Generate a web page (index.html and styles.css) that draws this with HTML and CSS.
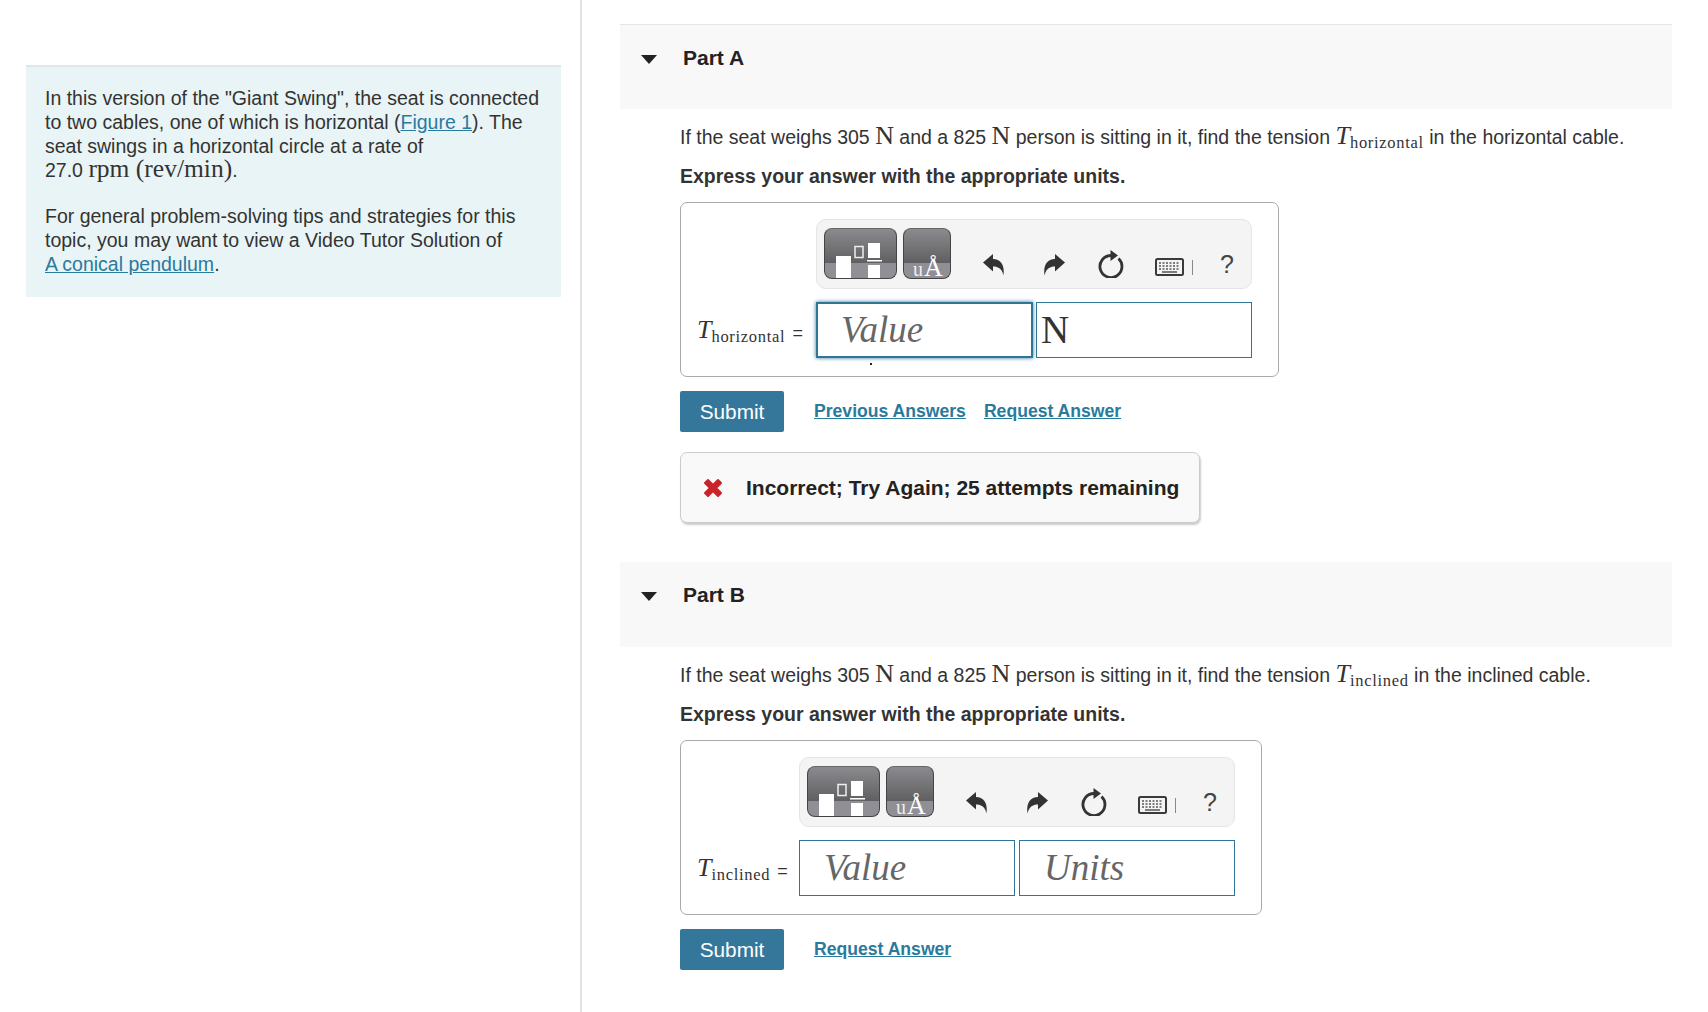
FILE: index.html
```html
<!DOCTYPE html>
<html>
<head>
    <title>Giant Swing</title>
    <link rel="stylesheet" href="styles.css">
</head>
<body>
    <svg class="sprite" width="0" height="0">
        <symbol id="undo" viewBox="0 0 22 23">
            <path d="M0 9.5 L10 1 V6 C17 6 22 11 20.5 22.5 C19 16 15.500 13.500 10 13.500 V18.500 Z"/>
        </symbol>
        <symbol id="redo" viewBox="0 0 22 23">
            <path d="M22 9.5 L12 1 V6 C5 6 0 11 1.500 22.500 C3 16 6.500 13.500 12 13.500 V18.500 Z"/>
        </symbol>
        <symbol id="reset" viewBox="0 0 26 28">
            <path d="M20.500 8.500 A11 11 0 1 1 13 5.500" fill="none" stroke="currentColor" stroke-width="2.800"/>
            <path d="M12.500 0 L20 5.500 L12.500 11 Z"/>
        </symbol>
        <symbol id="keyboard" viewBox="0 0 29 18">
            <rect x="1" y="1" width="27" height="16" rx="1.500" fill="#f4f4f4" stroke="#3a3a3a" stroke-width="2"/>
            <path d="M4 5 H25 M4 8 H25 M4 11 H25" stroke="#555" stroke-width="1.500" stroke-dasharray="2 1.500"/>
            <path d="M7 14 H22" stroke="#555" stroke-width="1.500"/>
        </symbol>
        <symbol id="templates" viewBox="0 0 73 51">
            <rect x="12" y="28" width="15" height="23" fill="#fff"/>
            <rect x="31" y="18.500" width="8" height="11" fill="none" stroke="#eee" stroke-width="1.500"/>
            <rect x="44" y="15" width="12" height="15" fill="#fff"/>
            <rect x="43" y="32" width="15" height="1.500" fill="#fff"/>
            <rect x="44" y="37" width="12" height="14" fill="#fff"/>
        </symbol>
    </svg>

    <div class="page">
        <!-- Intro column -->
        <div class="intro-col">
            <div class="intro">
                <p>In this version of the "Giant Swing", the seat is connected to two cables, one of which is horizontal (<a href="#">Figure 1</a>). The seat swings in a horizontal circle at a rate of <span class="nowrap">27.0 <span class="math">rpm (rev/min)</span>.</span></p>
                <p>For general problem-solving tips and strategies for this topic, you may want to view a Video Tutor Solution of <a class="nowrap" href="#">A conical pendulum</a>.</p>
            </div>
        </div>

        <!-- Parts column -->
        <div class="parts-col">
            <!-- Part A -->
            <div class="part part-first">
                <div class="part-head">
                    <span class="arrow"></span>
                    <h3>Part A</h3>
                </div>
                <div class="part-body">
                    <p class="question">If the seat weighs 305 <span class="big">N</span> and a 825 <span class="big">N</span> person is sitting in it, find the tension <span class="big"><i>T</i></span><span class="sub">horizontal</span> in the horizontal cable.</p>
                    <p class="express">Express your answer with the appropriate units.</p>
                    <div class="answer">
                        <div class="toolbar">
                            <div class="tool-btn tool-wide"><svg class="tool-art"><use href="#templates"/></svg></div>
                            <div class="tool-btn tool-units"><span class="units-glyph"><span class="units-u">u</span>Å</span></div>
                            <div class="tool-icons">
                                <svg class="icon icon-undo"><use href="#undo"/></svg>
                                <svg class="icon icon-redo"><use href="#redo"/></svg>
                                <svg class="icon icon-reset"><use href="#reset"/></svg>
                                <svg class="icon icon-kbd"><use href="#keyboard"/></svg>
                                <span class="tool-sep"></span>
                                <span class="tool-help">?</span>
                            </div>
                        </div>
                        <div class="answer-row">
                            <div class="label label-a"><i>T</i><span class="sub">horizontal</span><span class="equals">=</span></div>
                            <div class="field focused placeholder">Value<span class="stray-dot"></span></div>
                            <div class="field filled">N</div>
                        </div>
                    </div>
                    <div class="actions">
                        <button class="submit">Submit</button>
                        <a class="action-link" href="#">Previous Answers</a>
                        <a class="action-link" href="#">Request Answer</a>
                    </div>
                    <div class="feedback">
                        <svg class="cross" viewBox="0 0 20 20"><path d="M2 5 L5 2 L10 7 L15 2 L18 5 L13 10 L18 15 L15 18 L10 13 L5 18 L2 15 L7 10 Z" stroke="#cc2229" stroke-width="2" stroke-linejoin="round"/></svg>
                        <span>Incorrect; Try Again; 25 attempts remaining</span>
                    </div>
                </div>
            </div>

            <!-- Part B -->
            <div class="part">
                <div class="part-head">
                    <span class="arrow"></span>
                    <h3>Part B</h3>
                </div>
                <div class="part-body">
                    <p class="question">If the seat weighs 305 <span class="big">N</span> and a 825 <span class="big">N</span> person is sitting in it, find the tension <span class="big"><i>T</i></span><span class="sub">inclined</span> in the inclined cable.</p>
                    <p class="express">Express your answer with the appropriate units.</p>
                    <div class="answer">
                        <div class="toolbar">
                            <div class="tool-btn tool-wide"><svg class="tool-art"><use href="#templates"/></svg></div>
                            <div class="tool-btn tool-units"><span class="units-glyph"><span class="units-u">u</span>Å</span></div>
                            <div class="tool-icons">
                                <svg class="icon icon-undo"><use href="#undo"/></svg>
                                <svg class="icon icon-redo"><use href="#redo"/></svg>
                                <svg class="icon icon-reset"><use href="#reset"/></svg>
                                <svg class="icon icon-kbd"><use href="#keyboard"/></svg>
                                <span class="tool-sep"></span>
                                <span class="tool-help">?</span>
                            </div>
                        </div>
                        <div class="answer-row">
                            <div class="label label-b"><i>T</i><span class="sub">inclined</span><span class="equals">=</span></div>
                            <div class="field placeholder">Value</div>
                            <div class="field placeholder">Units</div>
                        </div>
                    </div>
                    <div class="actions">
                        <button class="submit">Submit</button>
                        <a class="action-link" href="#">Request Answer</a>
                    </div>
                </div>
            </div>
        </div>
    </div>
</body>
</html>
```

FILE: styles.css
```css
body {
    margin: 0;
    font-family: 'Liberation Sans', Arial, sans-serif;
    font-size: 19.500px;
    line-height: 24px;
    color: #333;
    background: #fff;
}

a {
    color: #2a7a9e;
}

.sprite {
    position: absolute;
}

.page {
    display: flex;
    min-height: 100vh;
}

/* Intro column */
.intro-col {
    width: 582px;
    flex: none;
    border-right: 2px solid #dfe3e6;
    box-sizing: border-box;
    padding: 65px 19px 0 26px;
}

.intro {
    background: #e9f4f6;
    border-top: 2px solid #dfe6e8;
    padding: 19px 19px 21px;
    color: #333;
}

.intro p {
    margin: 0;
}

.intro p + p {
    margin-top: 22px;
}

.nowrap {
    white-space: nowrap;
}

.math {
    font-family: 'Liberation Serif', serif;
    font-size: 25.500px;
    line-height: 0;
}

.big {
    font-family: 'Liberation Serif', serif;
    font-size: 26px;
    line-height: 0;
}

.sub {
    font-family: 'Liberation Serif', serif;
    font-size: 16.500px;
    letter-spacing: 0.7px;
    line-height: 0;
    position: relative;
    top: 4px;
}

/* Parts column */
.parts-col {
    flex: 1;
    padding: 24px 36px 0 38px;
    min-width: 0;
}

.part-head {
    display: flex;
    align-items: flex-start;
    height: 85px;
    box-sizing: border-box;
    padding: 21px 0 0 21px;
    background: #f8f8f8;
}

.part-first .part-head {
    border-top: 1px solid #e5e5e5;
}

.part-head h3 {
    margin: 0 0 0 26px;
    font-size: 21px;
    line-height: 24px;
    color: #222;
}

.arrow {
    width: 0;
    height: 0;
    margin-top: 9px;
    border-left: 8px solid transparent;
    border-right: 8px solid transparent;
    border-top: 9px solid #222;
}

.part-body {
    padding: 16px 0 39px 60px;
}

.question {
    margin: 0;
    white-space: nowrap;
}

.express {
    margin: 15px 0 14px;
    font-weight: bold;
}

/* Answer box */
.answer {
    width: fit-content;
    border: 1px solid #aaa;
    border-radius: 7px;
    padding: 16px 26px 18px 16px;
    display: flex;
    flex-direction: column;
    align-items: flex-end;
}

.toolbar {
    display: flex;
    align-items: flex-start;
    box-sizing: border-box;
    width: 436px;
    height: 70px;
    padding: 8px 0 0 7px;
    background: #f4f4f4;
    border: 1px solid #e4e4e4;
    border-radius: 10px;
}

.tool-btn {
    height: 51px;
    box-sizing: border-box;
    border: 1px solid #444;
    border-top-color: #666;
    border-radius: 8px;
    background: linear-gradient(#8b8b8f 0%, #5f5f61 70%, #908f96 70%, #908f96 100%);
}

.tool-wide {
    width: 73px;
    overflow: hidden;
}

.tool-units {
    width: 48px;
    margin-left: 6px;
    position: relative;
}

.tool-art {
    display: block;
    width: 73px;
    height: 51px;
    margin: -1px;
}

.units-glyph {
    position: absolute;
    left: 9px;
    bottom: -5px;
    font-family: 'Liberation Serif', serif;
    font-size: 26px;
    line-height: 28px;
    color: #fff;
    white-space: nowrap;
}

.units-u {
    margin-right: 1px;
    font-size: 20px;
    color: #eee;
}

.tool-icons {
    display: flex;
    align-items: center;
    height: 28px;
    margin-top: 22px;
    color: #333;
}

.icon {
    display: block;
    fill: #333;
    color: #333;
}

.icon-undo, .icon-redo {
    width: 22px;
    height: 23px;
}

.icon-undo {
    margin-left: 32px;
}

.icon-redo {
    margin-left: 38px;
}

.icon-reset {
    width: 26px;
    height: 28px;
    margin-left: 33px;
}

.icon-kbd {
    width: 29px;
    height: 18px;
    margin-left: 31px;
    margin-top: 6px;
}

.tool-sep {
    width: 1px;
    height: 15px;
    margin: 6px 0 0 8px;
    background: #888;
}

.tool-help {
    margin-left: 27px;
    font-size: 25px;
    color: #444;
}

.answer-row {
    display: flex;
    gap: 4px;
    margin-top: 13px;
}

.label {
    height: 56px;
    font-family: 'Liberation Serif', serif;
    font-size: 26px;
    line-height: 56px;
    white-space: nowrap;
}

.label-a {
    width: 115px;
}

.label-b {
    width: 98px;
}

.equals {
    margin-left: 7px;
    font-family: 'Liberation Sans', sans-serif;
    font-size: 18px;
    position: relative;
    top: 1px;
}

.field {
    position: relative;
    width: 216px;
    height: 56px;
    box-sizing: border-box;
    border: 1px solid #2f7596;
    font-family: 'Liberation Serif', serif;
    font-size: 37px;
    line-height: 54px;
}

.placeholder {
    padding-left: 24px;
    font-style: italic;
    color: #666;
}

.filled {
    padding-left: 4px;
    font-size: 39px;
    color: #333;
}

.focused {
    width: 217px;
    margin-right: -1px;
    border-width: 2px;
    line-height: 52px;
    padding-left: 23px;
    box-shadow: 0 0 4px #2f7596;
}

.stray-dot {
    position: absolute;
    left: 52px;
    top: 59px;
    width: 2px;
    height: 2px;
    background: #222;
}

/* Actions */
.actions {
    display: flex;
    align-items: center;
    margin-top: 14px;
}

.submit {
    width: 104px;
    height: 41px;
    border: none;
    border-radius: 2px;
    background: #35779b;
    color: #fff;
    font-family: 'Liberation Sans', sans-serif;
    font-size: 20.800px;
    cursor: pointer;
}

.action-link {
    margin-left: 18px;
    font-weight: bold;
    font-size: 17.600px;
    position: relative;
    top: -1px;
}

.submit + .action-link {
    margin-left: 30px;
}

/* Feedback */
.feedback {
    display: flex;
    align-items: center;
    width: fit-content;
    height: 71px;
    box-sizing: border-box;
    margin-top: 20px;
    padding: 0 20px 0 22px;
    background: #f9f9f9;
    border: 1px solid #ccc;
    border-radius: 7px;
    box-shadow: 1px 2px 2px #ccc;
    font-weight: bold;
    font-size: 21px;
    color: #222;
}

.cross {
    width: 20px;
    height: 20px;
    margin-right: 23px;
    fill: #cc2229;
}
```
